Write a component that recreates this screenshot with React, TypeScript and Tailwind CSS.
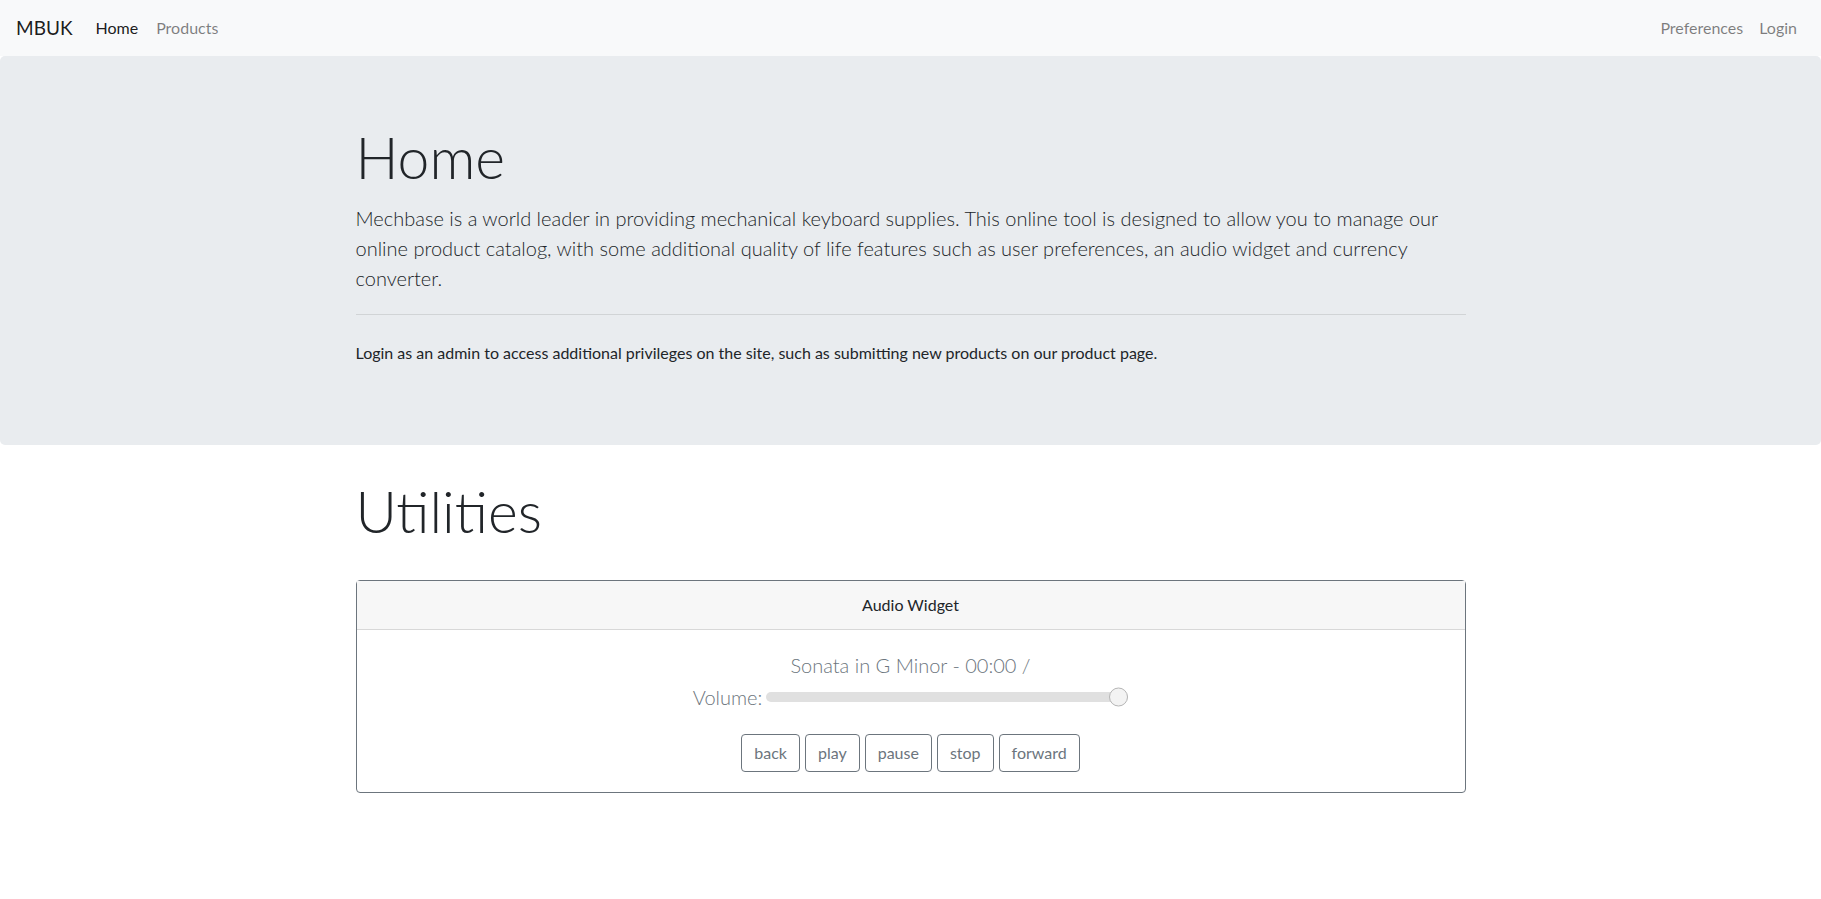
import React from 'react';

const controls = ['back', 'play', 'pause', 'stop', 'forward'];

export default function App() {
  return (
    <div className="min-h-screen bg-white font-['Lato','Open_Sans',sans-serif] text-[#212529]">
      {/* navbar */}
      <nav className="flex h-14 items-center bg-[#f8f9fa] px-4">
        <span className="mr-[15px] text-[19px] text-black/90">MBUK</span>
        <a className="px-2 text-base text-black/90">Home</a>
        <a className="pl-[10px] pr-2 text-base text-black/50">Products</a>
        <div className="ml-auto flex">
          <a className="px-2 text-base text-black/50">Preferences</a>
          <a className="px-2 text-base text-black/50">Login</a>
        </div>
      </nav>

      {/* jumbotron */}
      <div className="mb-8 rounded-[5px] bg-[#e9ecef] px-8 py-16">
        <div className="mx-auto max-w-[1140px] px-[15px]">
          <h1 className="mb-2 pt-[3px] text-[57px] font-light leading-[1.2]">Home</h1>
          <p className="mb-4 pt-[4px] text-xl font-light leading-[30px]">
            Mechbase is a world leader in providing mechanical keyboard supplies. This online tool is designed to allow you to manage our online product catalog, with some additional quality of life features such as user preferences, an audio widget and currency converter.
          </p>
          <hr className="mt-[21px] mb-[26px] border-black/10" />
          <p className="mb-4 text-base leading-6">
            Login as an admin to access additional privileges on the site, such as submitting new products on our product page.
          </p>
        </div>
      </div>

      {/* utilities */}
      <div className="mx-auto max-w-[1140px] px-[15px] pb-16">
        <h1 className="mb-[34px] text-[57px] font-light leading-[1.2]">Utilities</h1>

        <div className="rounded border border-[#6c757d]">
          <div className="border-b border-black/[.125] bg-[#f7f7f7] py-3 text-center text-base leading-6">
            Audio Widget
          </div>
          <div className="p-5 text-center text-[#6c757d]">
            <p className="text-xl font-light leading-[30px]">Sonata in G Minor - 00:00 /</p>
            <div className="flex h-[34px] items-center justify-center gap-[4px]">
              <span className="text-xl font-light">Volume:</span>
              <div className="relative h-[10px] w-[362px] rounded-full bg-[#e0e0e0]">
                <div className="absolute right-0 top-1/2 h-[19px] w-[19px] -translate-y-1/2 rounded-full border border-[#b5b5b5] bg-[#f3f3f3]" />
              </div>
            </div>
            <div className="mt-[20px] flex justify-center gap-[5px]">
              {controls.map((c) => (
                <button
                  key={c}
                  className="h-[38px] rounded border border-[#6c757d] px-3 text-base text-[#6c757d]"
                >
                  {c}
                </button>
              ))}
            </div>
          </div>
        </div>
      </div>
    </div>
  );
}
